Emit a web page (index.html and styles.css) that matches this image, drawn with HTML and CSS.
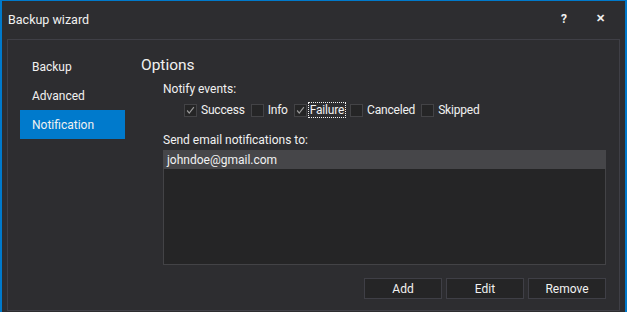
FILE: index.html
```html
<!DOCTYPE html>
<html lang="en">
<head>
    <meta charset="UTF-8">
    <title>Backup wizard</title>
    <link rel="stylesheet" href="styles.css">
</head>
<body>
    <div class="window">
        <div class="titlebar">
            <span class="title">Backup wizard</span>
            <div class="title-buttons">
                <span class="tb-btn">?</span>
                <span class="tb-btn close">&#x2715;</span>
            </div>
        </div>
        <div class="panel">
            <ul class="nav">
                <li class="nav-item">Backup</li>
                <li class="nav-item">Advanced</li>
                <li class="nav-item selected">Notification</li>
            </ul>
            <div class="content">
                <h2>Options</h2>
                <div class="group">
                    <div class="label">Notify events:</div>
                    <div class="checks">
                        <label class="check"><span class="box checked"><svg viewBox="0 0 13 13"><polyline points="2.5,6.5 5,9.5 10.5,2.5"/></svg></span><span class="text">Success</span></label>
                        <label class="check"><span class="box"></span><span class="text">Info</span></label>
                        <label class="check"><span class="box checked"><svg viewBox="0 0 13 13"><polyline points="2.5,6.5 5,9.5 10.5,2.5"/></svg></span><span class="text focus">Failure</span></label>
                        <label class="check"><span class="box"></span><span class="text">Canceled</span></label>
                        <label class="check"><span class="box"></span><span class="text">Skipped</span></label>
                    </div>

                    <div class="label email-label">Send email notifications to:</div>
                    <div class="listbox">
                        <div class="list-row selected">johndoe@gmail.com</div>
                    </div>

                    <div class="buttons">
                        <button type="button">Add</button>
                        <button type="button">Edit</button>
                        <button type="button">Remove</button>
                    </div>
                </div>
            </div>
        </div>
    </div>
</body>
</html>
```

FILE: styles.css
```css
body {
    margin: 0;
    background: #2d2d30;
    font-family: 'Roboto', 'Liberation Sans', sans-serif;
    font-size: 12px;
    color: #f1f1f1;
}

.window {
    width: 627px;
    height: 312px;
    box-sizing: border-box;
    background: #2d2d30;
    border-top: 1px solid #007acc;
    border-left: 2px solid #007acc;
    border-right: 2px solid #007acc;
    overflow: hidden;
}

.titlebar {
    height: 38px;
    display: flex;
    align-items: center;
    justify-content: space-between;
    padding-left: 6px;
}

.title {
    font-size: 12.5px;
    margin-top: -1px;
}

.title-buttons {
    display: flex;
    margin-top: -2px;
}

.tb-btn {
    width: 38px;
    text-align: center;
    font-weight: bold;
    font-size: 12px;
}

.tb-btn.close {
    width: 34px;
    font-size: 11px;
    margin-right: 8px;
}

.panel {
    margin-left: 5px;
    margin-right: 5px;
    height: 272px;
    box-sizing: border-box;
    border: 1px solid #3f3f46;
    display: flex;
}

.nav {
    list-style: none;
    margin: 12px 0 0 12px;
    padding: 0;
    width: 105px;
}

.nav-item {
    height: 29px;
    line-height: 31px;
    padding-left: 12px;
    overflow: hidden;
}

.nav-item.selected {
    background: #007acc;
}

.content {
    margin-left: 16px;
    padding-top: 14px;
    flex: 1;
    padding-right: 13px;
}

h2 {
    margin: 0;
    font-size: 15.5px;
    font-weight: normal;
    line-height: 22px;
}

.group {
    margin-left: 22px;
}

.label {
    line-height: 16px;
    margin-top: 5px;
}

.checks {
    display: flex;
    margin: 3px 0 0 21px;
    height: 20px;
    align-items: center;
    letter-spacing: -0.2px;
}

.check {
    display: flex;
    align-items: center;
    margin-right: 4px;
}

.box {
    width: 13px;
    height: 13px;
    box-sizing: border-box;
    border: 1px solid #434346;
    background: #252526;
    display: flex;
}

.box svg {
    width: 11px;
    height: 11px;
    fill: none;
    stroke: #999999;
    stroke-width: 1.4;
}

.text {
    padding: 0 1px;
    margin-left: 2px;
    line-height: 14px;
    border: 1px dotted transparent;
}

.text.focus {
    border-color: #f1f1f1;
    margin-left: 1px;
}

.email-label {
    margin-top: 12px;
}

.listbox {
    margin-top: 2px;
    height: 115px;
    box-sizing: border-box;
    border: 1px solid #434346;
    background: #252526;
}

.list-row {
    height: 19px;
    line-height: 20px;
    padding-left: 4px;
    margin: -1px -1px 0 -1px;
}

.list-row.selected {
    background: #464649;
}

.buttons {
    display: flex;
    justify-content: flex-end;
    gap: 4px;
    margin-top: 13px;
}

button {
    width: 78px;
    height: 21px;
    background: #252526;
    border: 1px solid #3f3f46;
    color: #f1f1f1;
    font-family: 'Roboto', 'Liberation Sans', sans-serif;
    font-size: 12px;
    padding: 0;
}
```
